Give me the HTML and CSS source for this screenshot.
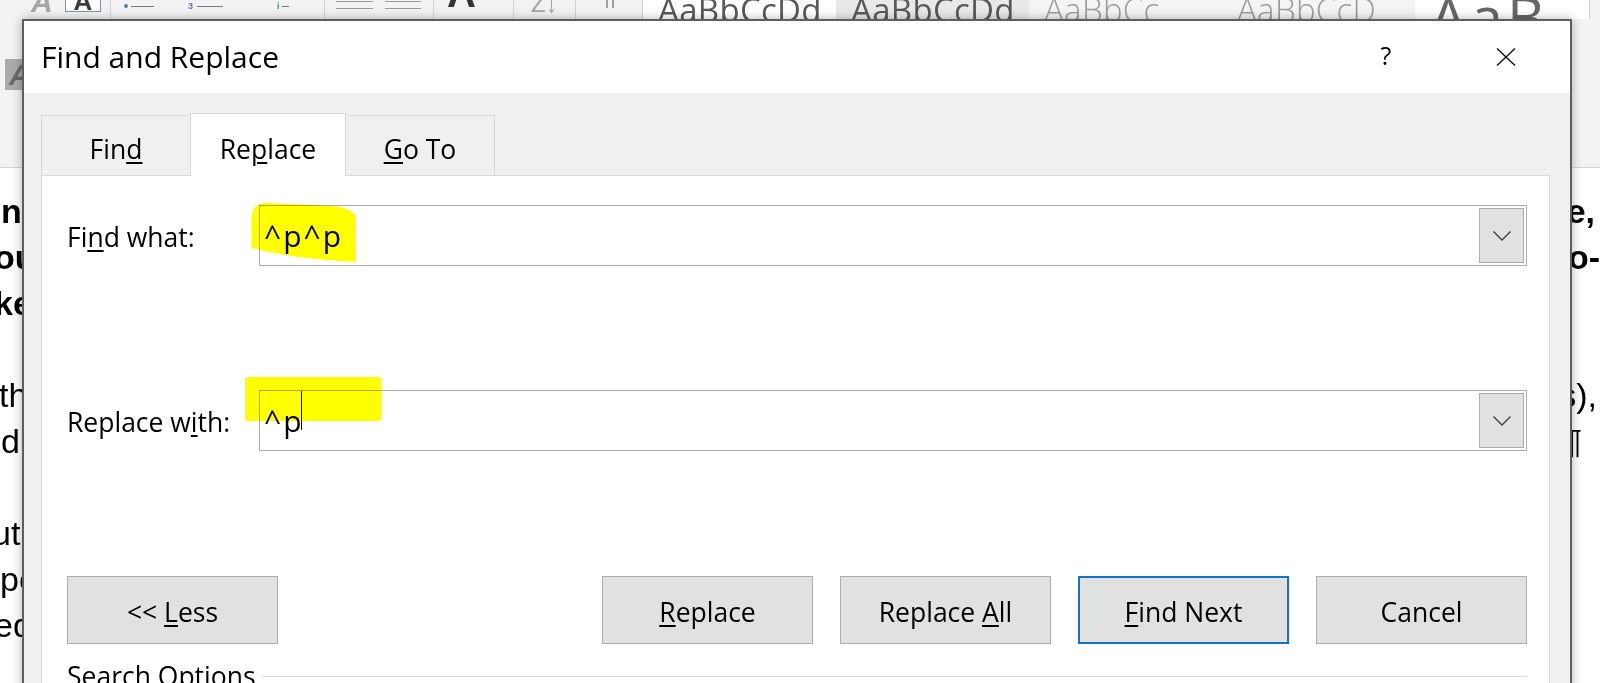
FILE: index.html
```html
<!DOCTYPE html>
<html lang="en">
<head>
<meta charset="utf-8">
<title>Find and Replace</title>
<link rel="stylesheet" href="styles.css">
</head>
<body>
<div class="word">
  <header class="ribbon">
    <div class="rb-top">
      <span class="rb-ait">A</span>
      <span class="rb-abox">A</span>
      <span class="rb-sep s1"></span>
      <span class="rb-bul"><i class="dot"></i><i class="ln"></i></span>
      <span class="rb-num"><b>3</b><i class="ln"></i></span>
      <span class="rb-ml"><b>i</b><i class="ln"></i></span>
      <span class="rb-sep s2"></span>
      <span class="rb-ind"><i class="ln"></i><i class="ln"></i></span>
      <span class="rb-ind b"><i class="ln"></i><i class="ln"></i></span>
      <span class="rb-sep s3"></span>
      <span class="rb-bigA">A</span>
      <span class="rb-sep s4"></span>
      <span class="rb-sort">Z↓</span>
      <span class="rb-sep s5"></span>
      <span class="rb-pil"><i></i><i></i></span>
      <span class="rb-sep s6"></span>
      <div class="gallery">
        <span class="st">AaBbCcDd</span>
        <span class="st sel">AaBbCcDd</span>
        <span class="st lt">AaBbCc</span>
        <span class="st lt">AaBbCcD</span>
        <span class="st big">AaB</span>
      </div>
      <span class="rb-sep s7"></span>
    </div>
    <div class="rb-mid"><span class="rb-hl">A</span></div>
  </header>
  <main class="doc">
    <div class="doc-left">
      <p class="b i1">n, this</p>
      <p class="b i2">ou can</p>
      <p class="b i3">ke the</p>
      <p></p>
      <p class="i5">th the</p>
      <p class="i6">d a</p>
      <p></p>
      <p class="i8">ut the</p>
      <p class="i9">pe</p>
      <p class="i10">eq</p>
    </div>
    <div class="doc-right">
      <p class="b r1">ne,</p>
      <p class="b r2">wo-</p>
      <p></p>
      <p></p>
      <p class="r5">ks),</p>
      <p class="r6">¶</p>
    </div>
  </main>
</div>

<section class="dialog">
  <div class="titlebar">
    <div class="title">Find and Replace</div>
    <div class="help">?</div>
    <div class="close">
      <svg width="20" height="18" viewBox="0 0 20 18"><path d="M1 0.5 L19 17.5 M19 0.5 L1 17.5" stroke="#111" stroke-width="1.4" fill="none"/></svg>
    </div>
  </div>
  <div class="dbody">
    <div class="tabs">
      <div class="tab find">Fin<u>d</u></div>
      <div class="tab replace">Re<u>p</u>lace</div>
      <div class="tab goto"><u>G</u>o To</div>
    </div>
    <div class="panel">
      <div class="form">
        <div class="lbl">Fi<u>n</u>d what:</div>
        <div class="field">
          <span class="val">^p^p</span>
          <svg class="hl hl-find" viewBox="0 0 104 59" preserveAspectRatio="none"><path d="M0 12 Q1 0 15 0 L80 3 Q100 5 104 14 L104 59 Q72 57 46 54 Q20 50 0 45 Z" fill="#ffff00"/></svg>
          <span class="dd"><svg width="18" height="10" viewBox="0 0 18 10"><path d="M0.5 0.5 L9 9 L17.5 0.5" stroke="#3a3a3a" stroke-width="1.3" fill="none"/></svg></span>
        </div>
        <div class="lbl">Replace w<u>i</u>th:</div>
        <div class="field">
          <span class="val"><span class="txt">^p<i class="caret"></i></span></span>
          <span class="hl hl-repl"></span>
          <span class="dd"><svg width="18" height="10" viewBox="0 0 18 10"><path d="M0.5 0.5 L9 9 L17.5 0.5" stroke="#3a3a3a" stroke-width="1.3" fill="none"/></svg></span>
        </div>
      </div>
      <div class="actions">
        <div class="btn"><span>&lt;&lt; <u>L</u>ess</span></div>
        <div class="btn-group">
          <div class="btn"><span><u>R</u>eplace</span></div>
          <div class="btn"><span>Replace <u>A</u>ll</span></div>
          <div class="btn primary"><span><u>F</u>ind Next</span></div>
          <div class="btn"><span>Cancel</span></div>
        </div>
      </div>
      <div class="options">
        <span class="opt-title">Search Options</span>
        <span class="opt-rule"></span>
      </div>
    </div>
  </div>
</section>
</body>
</html>
```

FILE: styles.css
```css
* { box-sizing: border-box; }
html, body { margin: 0; padding: 0; }
body {
  width: 1600px;
  height: 683px;
  overflow: hidden;
  position: relative;
  background: #fff;
  font-family: "Open Sans", "Noto Sans", sans-serif;
  color: #000;
}
i, b { font-style: normal; }
u {
  text-decoration-thickness: 2px;
  text-underline-offset: 3px;
}

/* ---------- Word ribbon behind the dialog ---------- */
.ribbon {
  height: 168px;
  background: #f3f3f3;
  border-bottom: 1px solid #d4d4d4;
  display: flex;
  flex-direction: column;
}
.rb-top {
  flex: none;
  height: 19px;
  display: flex;
  align-items: flex-start;
  overflow: hidden;
}
.rb-top > * { flex: none; }
.rb-sep { width: 1px; height: 19px; background: #d2d2d2; }
.s1 { margin-left: 9px; }
.s2 { margin-left: 35px; }
.s3 { margin-left: 12px; }
.s4 { margin-left: 37px; }
.s5 { margin-left: 14px; }
.s6 { margin-left: 28px; }
.s7 { margin-left: 0; }

.rb-ait {
  width: 22px;
  margin-left: 31px;
  margin-top: -13px;
  font: italic bold 30px/30px "Liberation Sans", Arial, sans-serif;
  color: #a6a6a6;
}
.rb-abox {
  width: 36px;
  height: 22px;
  margin-left: 12px;
  margin-top: -10px;
  border: 1px solid #7f93a8;
  background: #fdfdfd;
  display: flex;
  align-items: flex-end;
  justify-content: center;
  font: bold 26px/20px "Liberation Sans", Arial, sans-serif;
  color: #3b3b3b;
}
.rb-bul {
  width: 30px;
  height: 4px;
  margin-left: 13px;
  margin-top: 4px;
  display: flex;
  align-items: center;
  gap: 3px;
}
.dot { width: 4px; height: 4px; border-radius: 50%; background: #4a7ebb; }
.rb-bul .ln { width: 23px; height: 1px; background: #7a7a7a; }
.rb-num, .rb-ml {
  height: 10px;
  margin-top: 1px;
  display: flex;
  align-items: center;
  gap: 4px;
  font: bold 9px/10px "Liberation Sans", Arial, sans-serif;
  color: #4a7ebb;
}
.rb-num { width: 35px; margin-left: 34px; }
.rb-num .ln { width: 26px; height: 1px; background: #7a7a7a; }
.rb-ml { width: 12px; margin-left: 54px; gap: 2px; }
.rb-ml .ln { width: 7px; height: 1px; background: #7a7a7a; }
.rb-ind {
  width: 37px;
  height: 9px;
  margin-left: 11px;
  padding-top: 1px;
  display: flex;
  flex-direction: column;
  justify-content: space-between;
}
.rb-ind.b { width: 36px; margin-left: 12px; }
.rb-ind .ln { height: 1px; background: #9b9b9b; }
.rb-bigA {
  width: 29px;
  margin-left: 13px;
  margin-top: -27px;
  font: bold 40px/40px "Liberation Sans", Arial, sans-serif;
  color: #333;
}
.rb-sort {
  width: 30px;
  margin-left: 17px;
  margin-top: -8px;
  font: 24px/24px "Liberation Sans", Arial, sans-serif;
  color: #a3a3a3;
}
.rb-pil {
  width: 8px;
  height: 8px;
  margin-left: 30px;
  display: flex;
  justify-content: space-between;
}
.rb-pil i { width: 2px; height: 8px; background: #a0a0a0; }

.gallery { display: flex; height: 19px; background: #fff; }
.st {
  flex: none;
  width: 193px;
  height: 40px;
  padding-left: 15px;
  margin-top: -8px;
  font: 33px/36px "Open Sans", sans-serif;
  letter-spacing: 0.3px;
  color: #595959;
  white-space: nowrap;
  overflow: hidden;
}
.st.sel { background: #e9e9e9; }
.st.lt { color: #9c9c9c; font-weight: 300; background: #f4f4f4; }
.st.big {
  width: 174px;
  height: 64px;
  margin-top: -13px;
  font-size: 58px;
  line-height: 60px;
  letter-spacing: 4px;
  color: #666;
}

.rb-mid { flex: none; margin-top: 40px; height: 31px; }
.rb-hl {
  display: flex;
  width: 34px;
  height: 31px;
  margin-left: 5px;
  padding-left: 4px;
  background: #ababab;
  color: #6a6a6a;
  font: bold italic 30px/31px "Liberation Sans", Arial, sans-serif;
}

/* ---------- Document text behind the dialog ---------- */
.doc {
  display: flex;
  justify-content: space-between;
  padding-top: 20px;
  font-family: "Liberation Sans", Arial, sans-serif;
  font-size: 34px;
  line-height: 46px;
}
.doc p { margin: 0; height: 46px; white-space: nowrap; }
.doc-left { width: 120px; }
.i1 { text-indent: 1px; }
.i2 { text-indent: -6px; }
.i3 { text-indent: -6px; }
.i5 { text-indent: -1px; }
.i6 { text-indent: 1px; }
.i8 { text-indent: -8px; }
.i9 { text-indent: 0; }
.i10 { text-indent: -6px; }
.doc-right { width: 120px; text-align: right; }
.b { font-weight: bold; }
.r1 { padding-right: 5px; }
.r2 { margin-right: -2px; }
.r5 { padding-right: 3px; }
.r6 { padding-right: 18px; }

/* ---------- Dialog ---------- */
.dialog {
  position: absolute;
  left: 22px;
  top: 19px;
  width: 1550px;
  height: 700px;
  border: 2px solid #5e5e5e;
  background: #f0f0f0;
  box-shadow: 0 0 10px rgba(0, 0, 0, 0.3);
  display: flex;
  flex-direction: column;
}
.titlebar {
  flex: none;
  height: 72px;
  background: #fff;
  display: flex;
  align-items: center;
  padding-left: 17px;
}
.title { flex: 1; font-size: 30px; line-height: 40px; }
.help {
  width: 110px;
  text-align: center;
  font-size: 25px;
  line-height: 40px;
  padding-bottom: 4px;
}
.close {
  width: 129px;
  height: 40px;
  display: flex;
  align-items: center;
  justify-content: center;
}

.dbody {
  flex: 1;
  display: flex;
  flex-direction: column;
  padding: 20px 20px 0 17px;
}
.tabs {
  flex: none;
  height: 63px;
  margin-bottom: -1px;
  display: flex;
  align-items: flex-end;
  position: relative;
  z-index: 1;
}
.tab {
  height: 60px;
  margin-bottom: 1px;
  border: 1px solid #d9d9d9;
  border-bottom: 0;
  background: #f0f0f0;
  text-align: center;
  font-size: 26.5px;
  line-height: 36px;
  padding-top: 15px;
}
.tab.find { width: 150px; }
.tab.replace {
  width: 156px;
  height: 63px;
  margin: 0 -1px;
  padding-top: 17px;
  background: #fff;
  position: relative;
  z-index: 1;
}
.tab.goto { width: 150px; }

.panel {
  flex: 1;
  background: #fff;
  border: 1px solid #d9d9d9;
  padding: 29px 22px 0 25px;
}
.form {
  display: grid;
  grid-template-columns: 192px 1fr;
  row-gap: 124px;
  align-items: center;
}
.lbl { font-size: 26.5px; line-height: 36px; padding-top: 3px; }
.field {
  position: relative;
  height: 61px;
  border: 1px solid #ababab;
  background: #fff;
  display: flex;
  align-items: center;
  padding: 0 2px 0 4px;
}
.val {
  flex: 1;
  font-size: 30px;
  line-height: 40px;
  letter-spacing: 2px;
  white-space: nowrap;
}
.txt { position: relative; }
.caret {
  position: absolute;
  left: calc(100% - 3px);
  top: -9px;
  width: 1px;
  height: 39px;
  background: #000;
}
.hl {
  position: absolute;
  mix-blend-mode: multiply;
  pointer-events: none;
}
.hl-find { left: -8px; top: -3px; width: 104px; height: 59px; }
.hl-repl {
  left: -15px;
  top: -14px;
  width: 136px;
  height: 44px;
  background: #ffff00;
  border-radius: 3px;
}
.dd {
  flex: none;
  width: 45px;
  height: 55px;
  border: 1px solid #adadad;
  background: #e1e1e1;
  display: flex;
  align-items: center;
  justify-content: center;
}

.actions { display: flex; margin-top: 125px; }
.btn-group { margin-left: auto; display: flex; gap: 27px; }
.btn {
  flex: none;
  width: 211px;
  height: 68px;
  border: 1px solid #adadad;
  background: #e1e1e1;
  display: flex;
  align-items: center;
  justify-content: center;
  font-size: 26.5px;
  line-height: 36px;
  padding-top: 3px;
  white-space: nowrap;
}
.btn.primary { border: 2px solid #0f74d0; }

.options { display: flex; align-items: center; margin-top: 14px; }
.opt-title { font-size: 26.5px; line-height: 36px; white-space: nowrap; }
.opt-rule { flex: 1; height: 1px; background: #dcdcdc; margin-left: 6px; }
```
